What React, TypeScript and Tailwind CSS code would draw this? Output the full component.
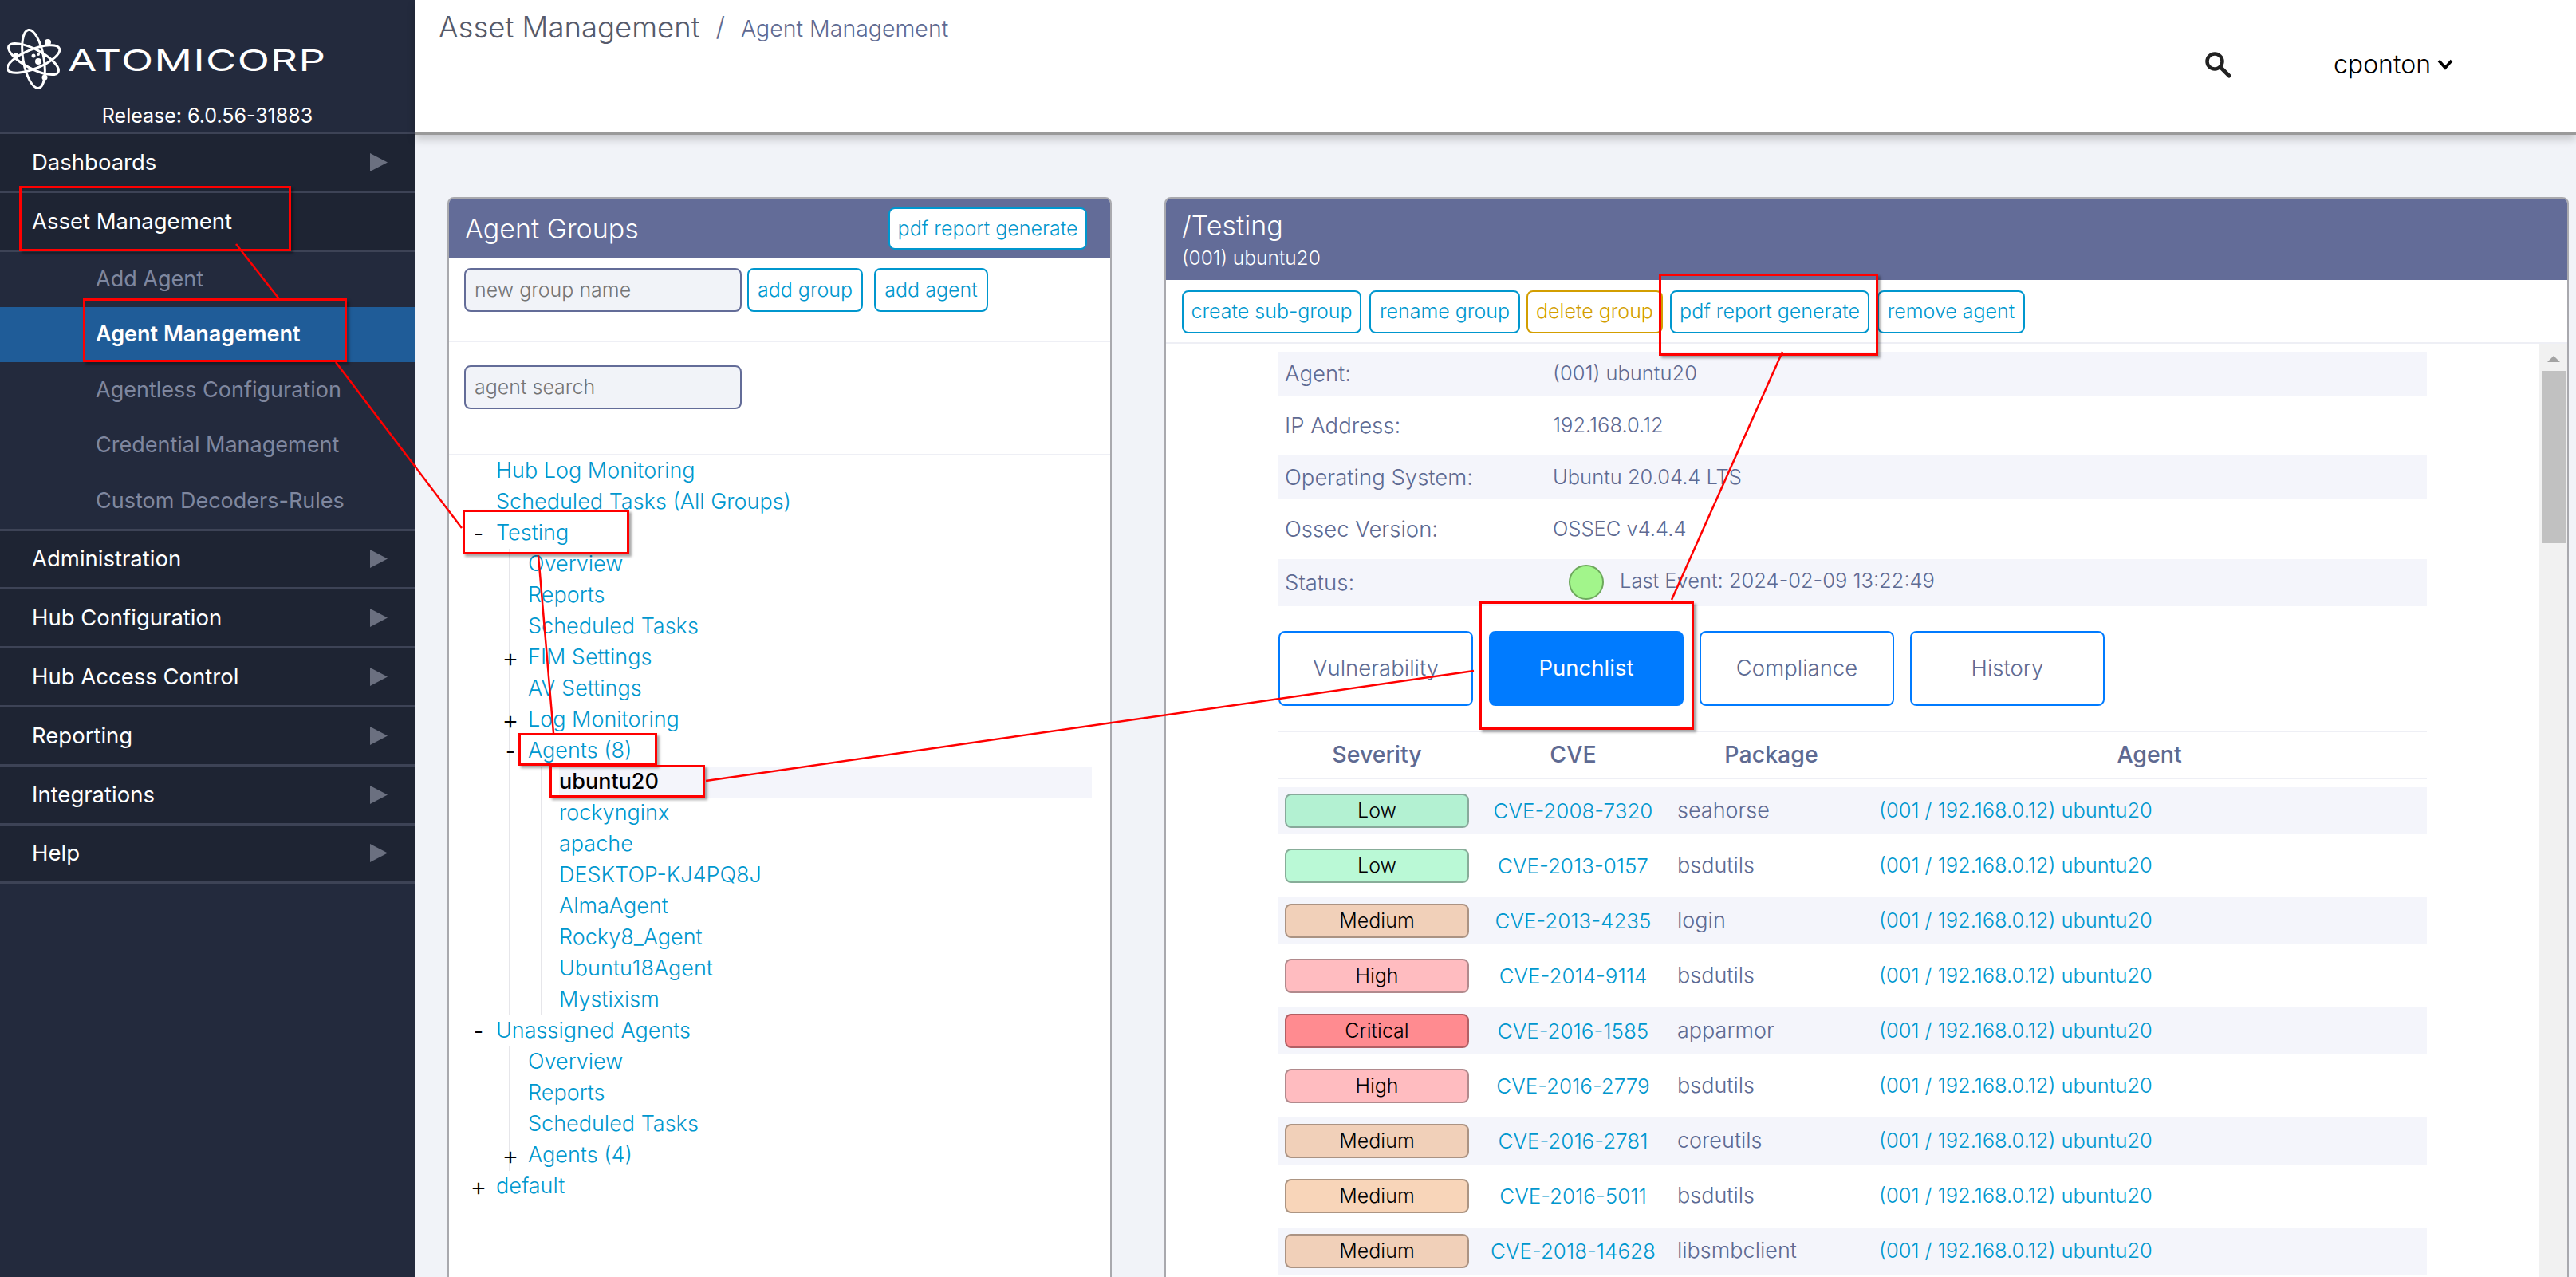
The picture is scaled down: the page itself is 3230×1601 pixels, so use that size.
import React from 'react';

const mainNav = ['Administration', 'Hub Configuration', 'Hub Access Control', 'Reporting', 'Integrations', 'Help'];
const subNav = ['Add Agent', 'Agent Management', 'Agentless Configuration', 'Credential Management', 'Custom Decoders-Rules'];

const punchlist = [
  { sev: 'Low', cve: 'CVE-2008-7320', pkg: 'seahorse', pill: 'bg-[#b3f1d2] border-[#88a99b]' },
  { sev: 'Low', cve: 'CVE-2013-0157', pkg: 'bsdutils', pill: 'bg-[#baf9d6] border-[#88ad99]' },
  { sev: 'Medium', cve: 'CVE-2013-4235', pkg: 'login', pill: 'bg-[#f1d0b9] border-[#ab9383]' },
  { sev: 'High', cve: 'CVE-2014-9114', pkg: 'bsdutils', pill: 'bg-[#ffbcc0] border-[#b18a8d]' },
  { sev: 'Critical', cve: 'CVE-2016-1585', pkg: 'apparmor', pill: 'bg-[#ff8b90] border-[#b25f64]' },
  { sev: 'High', cve: 'CVE-2016-2779', pkg: 'bsdutils', pill: 'bg-[#ffbcc0] border-[#b18a8d]' },
  { sev: 'Medium', cve: 'CVE-2016-2781', pkg: 'coreutils', pill: 'bg-[#f1d0b9] border-[#ab9383]' },
  { sev: 'Medium', cve: 'CVE-2016-5011', pkg: 'bsdutils', pill: 'bg-[#f8d5b9] border-[#ac9583]' },
  { sev: 'Medium', cve: 'CVE-2018-14628', pkg: 'libsmbclient', pill: 'bg-[#f1d0b9] border-[#ab9383]' },
];

const info = [
  { label: 'Agent:', value: '(001) ubuntu20', shade: true },
  { label: 'IP Address:', value: '192.168.0.12', shade: false },
  { label: 'Operating System:', value: 'Ubuntu 20.04.4 LTS', shade: true },
  { label: 'Ossec Version:', value: 'OSSEC v4.4.4', shade: false },
];

const agents = ['rockynginx', 'apache', 'DESKTOP-KJ4PQ8J', 'AlmaAgent', 'Rocky8_Agent', 'Ubuntu18Agent', 'Mystixism'];

const Arrow = () => (
  <svg width="22" height="23" viewBox="0 0 22 23" className="shrink-0">
    <polygon points="0,0 22,11.5 0,23" fill="#6b7080" />
  </svg>
);

const AtomLogo = () => (
  <svg width="70" height="80" viewBox="0 0 70 80" className="shrink-0">
    <g fill="none" stroke="#fff" strokeWidth="3">
      <ellipse cx="33" cy="39" rx="13" ry="37" transform="rotate(-10 33 39)" />
      <ellipse cx="33" cy="39" rx="12" ry="35" transform="rotate(68 33 39)" />
      <ellipse cx="33" cy="39" rx="12" ry="35" transform="rotate(118 33 39)" />
    </g>
    <g fill="#fff">
      <circle cx="51" cy="18" r="4" />
      <circle cx="11" cy="35" r="3.5" />
      <circle cx="47" cy="62" r="3.5" />
      <circle cx="39" cy="42" r="4" />
      <circle cx="33" cy="35" r="2.5" />
      <circle cx="39" cy="33" r="2" />
    </g>
  </svg>
);

const SideRow = ({ label, arrow = true }: { label: string; arrow?: boolean }) => (
  <div className="h-[73.8px] border-t-[3px] border-[#3d4356] bg-[#1e2433] flex items-center justify-between pl-[40px] pr-[34px] text-[27.5px] text-white">
    <span>{label}</span>
    {arrow && <Arrow />}
  </div>
);

const OutlineBtn = ({ children, tone = 'blue', className = '' }: { children: React.ReactNode; tone?: string; className?: string }) => (
  <button
    className={`flex items-center justify-center bg-white border-2 rounded-[8px] text-[25px] font-light whitespace-nowrap ${
      tone === 'orange' ? 'border-[#d39e00] text-[#d39e00]' : 'border-[#0097ce] text-[#0097ce]'
    } ${className}`}
  >
    {children}
  </button>
);

const TextInput = ({ placeholder }: { placeholder: string }) => (
  <div className="w-[348px] h-[55px] bg-[#f1f3f8] border-2 border-[#636c98] rounded-[8px] flex items-center pl-[11px] text-[25px] font-light text-[#757575]">
    {placeholder}
  </div>
);

const TreeLink = ({ text, className = '' }: { text: string; className?: string }) => (
  <span className={`text-[27px] font-light text-[#0097ce] whitespace-nowrap ${className}`}>{text}</span>
);

const RootRow = ({ text, mark = '' }: { text: string; mark?: string }) => (
  <div className="h-[39px] flex items-center">
    <span className={`w-[24px] ml-[25px] mr-[10px] text-center text-black ${mark === '+' ? 'text-[32px] font-light' : 'text-[26px]'}`}>{mark}</span>
    <TreeLink text={text} />
  </div>
);

const BranchRow = ({ text, mark = '' }: { text: string; mark?: string }) => (
  <div className="h-[39px] flex items-center">
    <span className={`w-[24px] -ml-[12px] mr-[10px] text-center text-black ${mark === '+' ? 'text-[32px] font-light' : 'text-[26px]'}`}>{mark}</span>
    <TreeLink text={text} />
  </div>
);

const Tab = ({ label, active = false }: { label: string; active?: boolean }) => (
  <div
    className={`w-[244px] h-[94px] rounded-[8px] border-2 border-[#007bff] flex items-center justify-center text-[27.5px] font-light ${
      active ? 'bg-[#007bff] text-white font-normal' : 'bg-white text-[#5e6a92]'
    }`}
  >
    {label}
  </div>
);

const Annot = ({ className }: { className: string }) => (
  <div className={`absolute border-[3px] border-[#f00] shadow-[3px_3px_3px_rgba(0,0,0,0.35)] ${className}`} />
);

export default function App() {
  return (
    <div className="relative w-[3230px] h-[1601px] overflow-hidden flex bg-[#f1f3f8] font-[Inter,'Noto_Sans',sans-serif]">
      {/* Sidebar */}
      <aside className="w-[520px] shrink-0 flex flex-col bg-[#232a3d]">
        <div className="h-[165px] shrink-0">
          <div className="flex items-center pt-[35px] pl-[9px] gap-[6px]">
            <AtomLogo />
            <span className="text-[37px] leading-none font-normal text-white tracking-[1px] origin-left scale-x-[1.42]">ATOMICORP</span>
          </div>
          <div className="text-center text-[25px] leading-[30px] text-white mt-[15px]">Release: 6.0.56-31883</div>
        </div>
        <SideRow label="Dashboards" />
        <SideRow label="Asset Management" arrow={false} />
        <div className="border-t-[3px] border-[#3d4356]">
          {subNav.map((item) => (
            <div
              key={item}
              className={`h-[69.4px] flex items-center pl-[120px] text-[27px] ${
                item === 'Agent Management' ? 'bg-[#1f5c98] text-white font-semibold' : 'text-[#7f879f]'
              }`}
            >
              {item}
            </div>
          ))}
        </div>
        {mainNav.map((item) => (
          <SideRow key={item} label={item} />
        ))}
        <div className="border-t-[3px] border-[#3d4356] flex-1" />
      </aside>

      <div className="flex-1 min-w-0 flex flex-col">
        {/* Top bar */}
        <header className="h-[169px] shrink-0 bg-white border-b-[3px] border-[#9a9a9a] shadow-[0_6px_10px_rgba(0,0,0,0.18)] relative flex justify-between pl-[30px] pr-[154px]">
          <div className="flex items-start gap-[20px] pt-[7px] font-light">
            <span className="text-[36.5px] text-[#555a6b]">Asset Management</span>
            <span className="text-[33px] mt-[2px] text-[#5e6a92]">/</span>
            <span className="text-[28.5px] text-[#5e6a92] mt-[8px]">Agent Management</span>
          </div>
          <div className="flex items-center pb-[4px]">
            <svg width="34" height="34" viewBox="0 0 34 34" className="mr-[128px]">
              <circle cx="13" cy="13" r="9.5" fill="none" stroke="#222" strokeWidth="4.5" />
              <line x1="20" y1="20" x2="31" y2="31" stroke="#222" strokeWidth="5" strokeLinecap="round" />
            </svg>
            <span className="text-[32px] font-light text-black">cponton</span>
            <svg width="20" height="14" viewBox="0 0 20 14" className="ml-[8px]">
              <polyline points="2,2 10,11 18,2" fill="none" stroke="#000" strokeWidth="3.5" />
            </svg>
          </div>
        </header>

        {/* Cards */}
        <main className="flex-1 min-h-0 flex items-stretch pl-[41px] pt-[78px] gap-[66px]">
          {/* Agent Groups */}
          <section className="w-[833px] shrink-0 bg-white border-t-2 border-x-2 border-[#a9a9ae] rounded-t-[8px] flex flex-col">
            <div className="h-[75px] bg-[#636c98] rounded-t-[6px] flex items-center justify-between pl-[20px] pr-[29px]">
              <span className="text-[34px] font-light text-white">Agent Groups</span>
              <OutlineBtn className="w-[249px] h-[53px]">pdf report generate</OutlineBtn>
            </div>
            <div className="h-[105px] border-b-2 border-[#eeeff5] pl-[19px] pt-[12px] flex items-start">
              <TextInput placeholder="new group name" />
              <OutlineBtn className="w-[145px] h-[55px] ml-[7px]">add group</OutlineBtn>
              <OutlineBtn className="w-[143px] h-[55px] ml-[14px]">add agent</OutlineBtn>
            </div>
            <div className="h-[142px] border-b-2 border-[#eeeff5] pl-[19px] pt-[29px]">
              <TextInput placeholder="agent search" />
            </div>
            <div className="flex-1">
              <RootRow text="Hub Log Monitoring" />
              <RootRow text="Scheduled Tasks (All Groups)" />
              <RootRow text="Testing" mark="-" />
              <div className="ml-[75px] border-l-2 border-[#e6e6ea]">
                <BranchRow text="Overview" />
                <BranchRow text="Reports" />
                <BranchRow text="Scheduled Tasks" />
                <BranchRow text="FIM Settings" mark="+" />
                <BranchRow text="AV Settings" />
                <BranchRow text="Log Monitoring" mark="+" />
                <BranchRow text="Agents (8)" mark="-" />
                <div className="ml-[38px] border-l-2 border-[#e6e6ea]">
                  <div className="h-[39px] ml-[21px] w-[668px] bg-[#f4f5fb] flex items-center">
                    <span className="text-[27px] font-medium text-black">ubuntu20</span>
                  </div>
                  {agents.map((a) => (
                    <div key={a} className="h-[39px] pl-[21px] flex items-center">
                      <TreeLink text={a} />
                    </div>
                  ))}
                </div>
              </div>
              <RootRow text="Unassigned Agents" mark="-" />
              <div className="ml-[75px] border-l-2 border-[#e6e6ea]">
                <BranchRow text="Overview" />
                <BranchRow text="Reports" />
                <BranchRow text="Scheduled Tasks" />
                <BranchRow text="Agents (4)" mark="+" />
              </div>
              <RootRow text="default" mark="+" />
            </div>
          </section>

          {/* Agent detail */}
          <section className="w-[1761px] shrink-0 bg-white border-t-2 border-x-2 border-[#a9a9ae] rounded-t-[8px] flex flex-col">
            <div className="h-[102px] bg-[#636c98] rounded-t-[6px] pl-[20px] pt-[12px] text-white font-light">
              <div className="text-[34px] leading-[44px]">/Testing</div>
              <div className="text-[24.5px] leading-[36px]">(001) ubuntu20</div>
            </div>
            <div className="h-[80px] border-b-2 border-[#eeeff5] pl-[20px] pt-[13px] flex items-start">
              <OutlineBtn className="w-[225px] h-[54px]">create sub-group</OutlineBtn>
              <OutlineBtn className="w-[189px] h-[54px] ml-[10px]">rename group</OutlineBtn>
              <OutlineBtn tone="orange" className="w-[171px] h-[54px] ml-[8px]">delete group</OutlineBtn>
              <OutlineBtn className="w-[250px] h-[54px] ml-[9px]">pdf report generate</OutlineBtn>
              <OutlineBtn className="w-[185px] h-[54px] ml-[10px]">remove agent</OutlineBtn>
            </div>
            <div className="flex-1 min-h-0 flex">
              <div className="flex-1 overflow-hidden pl-[141px] pt-[10px]">
                <div className="w-[1440px] text-[25.5px] font-light text-[#5e6a92]">
                  {info.map((row) => (
                    <div key={row.label} className={`h-[55px] mb-[10px] flex items-center pl-[8px] ${row.shade ? 'bg-[#f4f5fb]' : ''}`}>
                      <span className="w-[336px] text-[27.5px]">{row.label}</span>
                      <span>{row.value}</span>
                    </div>
                  ))}
                  <div className="h-[59px] bg-[#f4f5fb] flex items-center pl-[8px]">
                    <span className="w-[356px] text-[27.5px]">Status:</span>
                    <span className="w-[44px] h-[44px] rounded-full bg-[#a2f58b] border-2 border-[#6da85c] -mt-[2px]" />
                    <span className="ml-[20px] -mt-[4px]">Last Event: 2024-02-09 13:22:49</span>
                  </div>

                  <div className="flex gap-[20px] mt-[31px]">
                    <Tab label="Vulnerability" />
                    <Tab label="Punchlist" active />
                    <Tab label="Compliance" />
                    <Tab label="History" />
                  </div>

                  <div className="mt-[31px] border-y-2 border-[#eeeff5] h-[61px] grid grid-cols-[247px_245px_252px_1fr] items-center text-center text-[28.5px] font-medium">
                    <span>Severity</span>
                    <span>CVE</span>
                    <span>Package</span>
                    <span>Agent</span>
                  </div>
                  <div className="pt-[10px]">
                    {punchlist.map((row, i) => (
                      <div
                        key={row.cve}
                        className={`h-[59px] mb-[10px] grid grid-cols-[247px_245px_252px_1fr] items-center ${i % 2 === 0 ? 'bg-[#f4f5fb]' : ''}`}
                      >
                        <span className={`ml-[8px] w-[231px] h-[43px] flex items-center justify-center border-2 rounded-[8px] text-[25px] text-black ${row.pill}`}>
                          {row.sev}
                        </span>
                        <span className="text-center text-[26px] text-[#0097ce]">{row.cve}</span>
                        <span className="pl-[8px] text-[27px]">{row.pkg}</span>
                        <span className="pl-[9px] text-[#0097ce]">(001 / 192.168.0.12) ubuntu20</span>
                      </div>
                    ))}
                  </div>
                </div>
              </div>
              {/* Scrollbar */}
              <div className="w-[35px] shrink-0 bg-[#f1f1f1] flex flex-col items-center pt-[15px]">
                <svg width="16" height="8" viewBox="0 0 16 8">
                  <polygon points="8,0 16,8 0,8" fill="#a3a3a3" />
                </svg>
                <div className="w-[30px] h-[216px] bg-[#c1c1c1] mt-[11px]" />
              </div>
            </div>
          </section>
        </main>
      </div>

      {/* Red annotations drawn over the screenshot */}
      <Annot className="left-[24px] top-[233px] w-[341px] h-[82px]" />
      <Annot className="left-[104px] top-[374px] w-[331px] h-[80px]" />
      <Annot className="left-[580px] top-[639px] w-[209px] h-[56px]" />
      <Annot className="left-[650px] top-[919px] w-[174px] h-[41px]" />
      <Annot className="left-[689px] top-[959px] w-[195px] h-[41px]" />
      <Annot className="left-[1855px] top-[754px] w-[269px] h-[161px]" />
      <Annot className="left-[2080px] top-[343px] w-[275px] h-[103px]" />
      <svg className="absolute inset-0 pointer-events-none" width="3230" height="1601">
        <g stroke="#f00" strokeWidth="2.5" fill="none">
          <line x1="296" y1="306" x2="351" y2="376" />
          <line x1="421" y1="454" x2="579" y2="662" />
          <line x1="675" y1="696" x2="694" y2="919" />
          <line x1="885" y1="979" x2="1848" y2="841" />
          <line x1="2235" y1="441" x2="2096" y2="752" />
        </g>
      </svg>
    </div>
  );
}
